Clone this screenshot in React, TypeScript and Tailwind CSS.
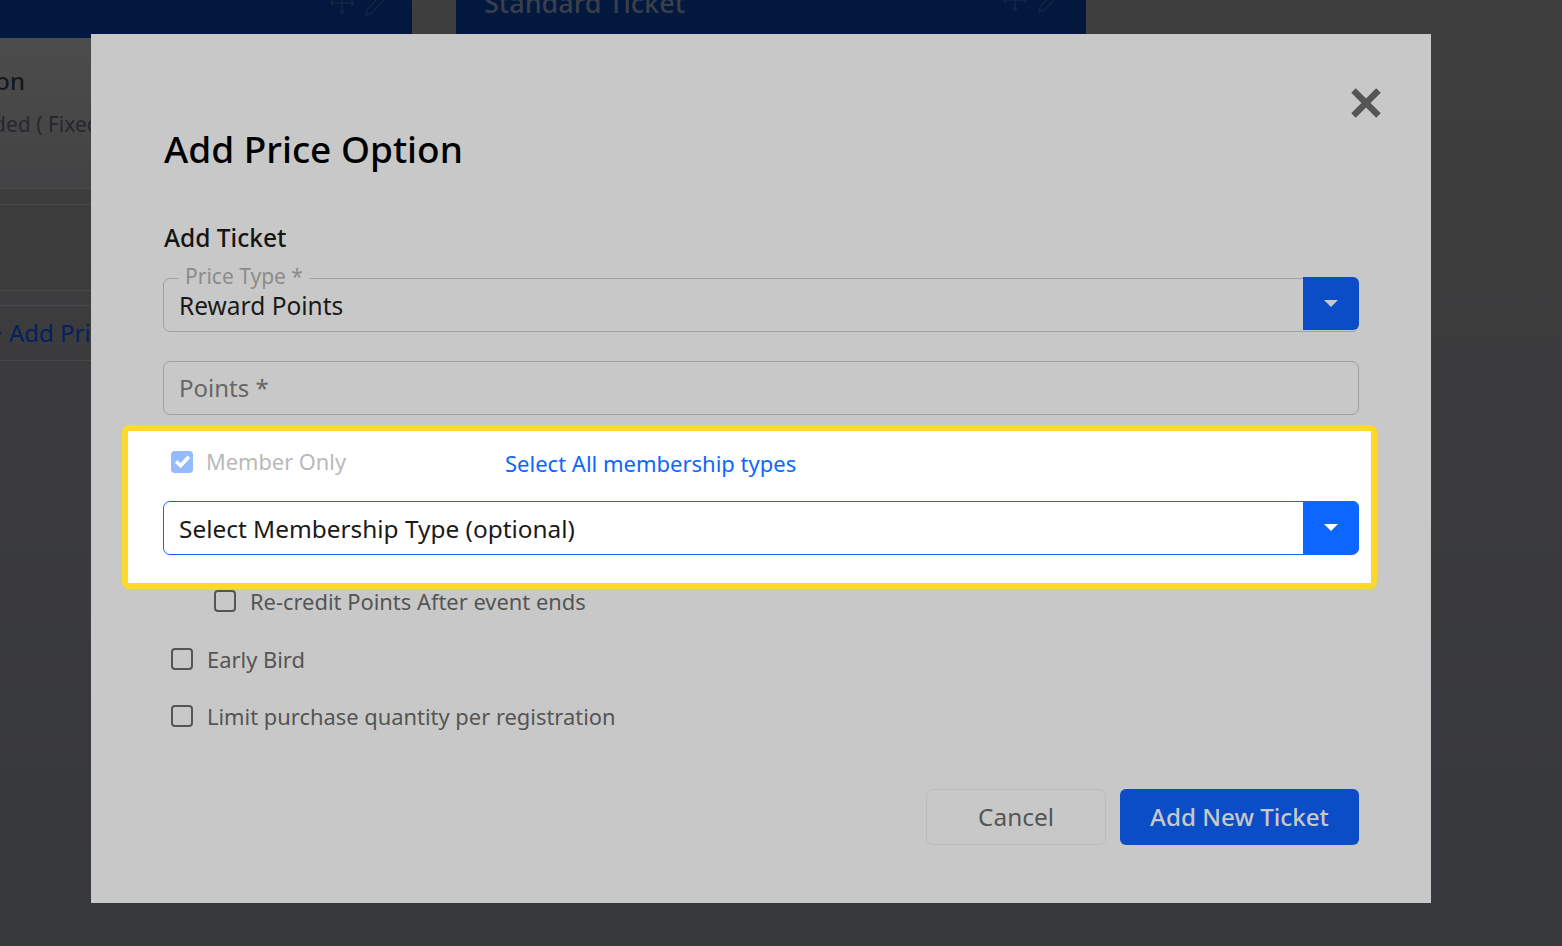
const font = "font-['Noto_Sans','Open_Sans',sans-serif]";

function Caret({ color }: { color: string }) {
  return (
    <svg width="14" height="7" viewBox="0 0 14 7">
      <path d="M0 0H14L7 7Z" fill={color} />
    </svg>
  );
}

function CheckRow({ label, className }: { label: string; className: string }) {
  return (
    <div className={`flex items-center gap-[14px] ${className}`}>
      <span className="w-[22px] h-[22px] rounded-[4px] border-2 border-[#555555]" />
      <span className="h-[30px] text-[21.9px] leading-[32px] text-[#555555]">{label}</span>
    </div>
  );
}

function HeaderIcons() {
  return (
    <div className="flex items-center gap-[11px] opacity-70">
      <svg width="24" height="18" viewBox="0 0 24 18" fill="none" stroke="#1f2a44" strokeWidth="1.5">
        <path d="M1 5H23M12 -6V15M3 2L0.5 5L3 8M21 2L23.5 5L21 8M9.5 12.5L12 15.5L14.5 12.5" />
      </svg>
      <svg width="20" height="18" viewBox="0 0 20 18" fill="none" stroke="#1f2a44" strokeWidth="1.5">
        <path d="M2 12L1 17L6 15.5L20 1M2 12L14 -1" />
      </svg>
    </div>
  );
}

export default function App() {
  return (
    <div className={`relative w-[1562px] h-[946px] overflow-hidden bg-gradient-to-b from-[#3e3e3e] to-[#37383c] ${font}`}>
      {/* page behind the dialog */}
      <div className="flex gap-[44px] items-start">
        <div className="w-[412px] shrink-0">
          <div className="h-[38px] bg-[#03183f] flex justify-end items-end pr-[27px]">
            <div className="mb-[22px]">
              <HeaderIcons />
            </div>
          </div>
          <div className="h-[151px] bg-gradient-to-b from-[#4c4c4c] to-[#434345] border-b border-[#4a4b4d] overflow-hidden">
            <p className="mt-[26px] -ml-[150px] text-[24px] leading-[34px] font-medium text-[#16181c] whitespace-nowrap text-right w-[175px]">Option</p>
            <p className="mt-[9px] text-[21px] leading-[34px] text-[#26282c] whitespace-nowrap -ml-[7px]">ded ( Fixed</p>
          </div>
          <div className="h-[16px] border-b border-[#47484a]" />
          <div className="h-[86px] border-b border-[#47484a]" />
          <div className="h-[15px] border-b border-[#47484a]" />
          <div className="h-[55px] border-b border-[#47484a] flex items-center -ml-[11px] text-[24px] text-[#03215e] whitespace-nowrap">
            + Add Price
          </div>
        </div>
        <div className="w-[630px] shrink-0 h-[38px] bg-[#03183f] flex justify-between pl-[28px] pr-[28px] overflow-hidden">
          <span className="-mt-[13px] text-[27px] leading-[32px] font-medium text-[#3b3f4a]">Standard Ticket</span>
          <div className="-mt-[5px]">
            <HeaderIcons />
          </div>
        </div>
      </div>

      {/* dialog */}
      <div className="absolute left-[91px] top-[34px] w-[1340px] h-[869px] bg-[#c8c8c8] px-[72px]">
        <button className="absolute right-[50px] top-[54px]">
          <svg width="30" height="30" viewBox="0 0 30 30" fill="none" stroke="#555555" strokeWidth="6.4" className="block">
            <path d="M2.5 2.5L27.5 27.5M27.5 2.5L2.5 27.5" />
          </svg>
        </button>
        <h1 className="pt-[91px] pl-px text-[37px] leading-[48px] font-medium text-black">Add Price Option</h1>
        <h2 className="mt-[47px] pl-px text-[24.5px] leading-[36px] font-medium text-[#151515]">Add Ticket</h2>

        <div className="relative mt-[22px] h-[54px] border border-[#a0a0a0] rounded-[7px] flex items-center justify-between pl-[15px]">
          <span className="absolute left-[14px] -top-[15px] px-[7px] bg-[#c8c8c8] text-[21px] leading-[24px] text-[#8c8c8c]">Price Type *</span>
          <span className="pt-[3px] text-[24.5px] text-[#1a1a1a]">Reward Points</span>
          <span className="w-[56px] h-[53px] -mt-[3px] -mr-px bg-[#0a4dc7] rounded-r-[6px] flex items-center justify-center">
            <Caret color="#c8c8c8" />
          </span>
        </div>

        <div className="mt-[29px] h-[54px] border border-[#a0a0a0] rounded-[7px] flex items-center pl-[15px] text-[24px] text-[#666666]">
          Points *
        </div>

        {/* highlighted section */}
        <div className="-ml-[41px] -mr-[18px] mt-[10px] h-[164px] border-[6px] border-[#ffd92a] rounded-[7px] bg-white pl-[35px] pr-[12px]">
          <div className="h-[70px] flex items-center gap-[14px] pl-[8px] pb-[9px]">
            <span className="w-[22px] h-[22px] rounded-[4px] bg-[#94bbff] flex items-center justify-center">
              <svg width="17" height="15" viewBox="0 0 16 14" fill="none" stroke="white" strokeWidth="3.4">
                <path d="M2 7L6.2 11L14 2.5" />
              </svg>
            </span>
            <span className="-ml-px text-[21.8px] leading-[30px] text-[#b9b9b9]">Member Only</span>
            <span className="ml-[145px] mt-[2px] text-[22px] leading-[30px] text-[#0d66ff]">Select All membership types</span>
          </div>
          <div className="h-[54px] border border-[#0d66ff] rounded-[7px] flex items-center justify-between pl-[15px]">
            <span className="pt-[2px] text-[24.4px] text-[#1a1a1a]">Select Membership Type (optional)</span>
            <span className="w-[56px] h-[53px] -mt-px -mr-px bg-[#0d66ff] rounded-r-[6px] flex items-center justify-center">
              <Caret color="white" />
            </span>
          </div>
        </div>

        <CheckRow label="Re-credit Points After event ends" className="ml-[51px] -mt-[3px]" />
        <CheckRow label="Early Bird" className="ml-[8px] mt-[28px]" />
        <CheckRow label="Limit purchase quantity per registration" className="ml-[8px] mt-[27px]" />

        <div className="mt-[58px] flex justify-end gap-[14px]">
          <button className="w-[180px] h-[56px] rounded-[7px] border border-[#bcbcbc] text-[24.4px] text-[#555555]">Cancel</button>
          <button className="w-[239px] h-[56px] rounded-[6px] bg-[#0a4dc7] text-[24.2px] font-medium text-[#c8c8c8]">Add New Ticket</button>
        </div>
      </div>
    </div>
  );
}
